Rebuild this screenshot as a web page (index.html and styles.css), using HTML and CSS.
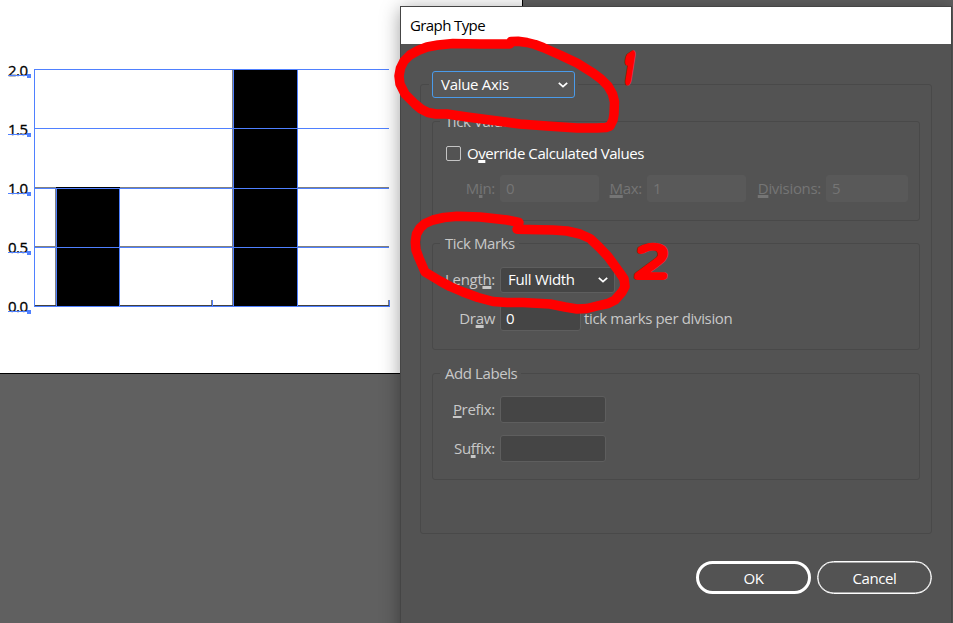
FILE: index.html
```html
<!DOCTYPE html>
<html lang="en">
<head>
    <meta charset="UTF-8">
    <meta name="viewport" content="width=device-width, initial-scale=1.0">
    <title>Graph Type</title>
    <link rel="stylesheet" href="styles.css">
</head>
<body>
    <div class="workspace">
        <div class="artboard">
            <svg class="graph" width="400" height="330" viewBox="0 0 400 330" shape-rendering="crispEdges">
                <g class="graph-labels">
                    <text x="8" y="75.5" textLength="20">2.0</text>
                    <text x="8" y="134.5" textLength="20">1.5</text>
                    <text x="8" y="193.5" textLength="20">1.0</text>
                    <text x="8" y="252.5" textLength="20">0.5</text>
                    <text x="8" y="311.5" textLength="20">0.0</text>
                </g>
                <g class="graph-ticks">
                    <path d="M34 187.5H389M34 246.5H389M232.5 70V306M55.5 187V306M388.5 300V306M211.5 300V306"/>
                    <path class="dark" d="M34 305.5H389"/>
                </g>
                <rect x="56" y="187" width="64" height="119"/>
                <rect x="233" y="70" width="64" height="236"/>
                <!-- selection outline -->
                <g class="graph-selection">
                    <path d="M34.5 69V307M34 69.5H389M34 128.5H389M34 188.5H389M34 247.5H389M34 306.5H389"/>
                    <path d="M56.5 188V306M119.5 188V306M233.5 70V306M297.5 70V306M212.5 300V306M389.5 300V307"/>
                    <path d="M8 75.5H28M8 134.5H28M8 193.5H28M8 252.5H28M8 311.5H28"/>
                </g>
                <g class="graph-anchors">
                    <rect x="27" y="74" width="4" height="4"/>
                    <rect x="27" y="133" width="4" height="4"/>
                    <rect x="27" y="192" width="4" height="4"/>
                    <rect x="27" y="251" width="4" height="4"/>
                    <rect x="27" y="310" width="4" height="4"/>
                </g>
            </svg>
        </div>

        <div class="dialog">
            <div class="dialog-title">Graph Type</div>
            <div class="dialog-body">
                <fieldset class="panel">
                    <legend>
                        <div class="select select-axis focused">
                            <span>Value Axis</span>
                            <svg width="10" height="6" viewBox="0 0 10 6"><path d="M.8.8L5 4.6 9.2.8"/></svg>
                        </div>
                    </legend>

                    <fieldset class="group group-values">
                        <legend>Tick Values</legend>
                        <div class="check-row">
                            <span class="checkbox"></span>
                            <span>O<u>v</u>erride Calculated Values</span>
                        </div>
                        <div class="row disabled">
                            <label>M<u>i</u>n:</label>
                            <div class="input w-99">0</div>
                            <label class="label-max"><u>M</u>ax:</label>
                            <div class="input w-99">1</div>
                            <label class="label-div"><u>D</u>ivisions:</label>
                            <div class="input w-82">5</div>
                        </div>
                    </fieldset>

                    <fieldset class="group group-marks">
                        <legend>Tick Marks</legend>
                        <div class="row">
                            <label>Lengt<u>h</u>:</label>
                            <div class="select select-length">
                                <span>Full Width</span>
                                <svg width="10" height="6" viewBox="0 0 10 6"><path d="M.8.8L5 4.6 9.2.8"/></svg>
                            </div>
                        </div>
                        <div class="row">
                            <label>Dr<u>a</u>w</label>
                            <div class="input w-81">0</div>
                            <span class="suffix">tick marks per division</span>
                        </div>
                    </fieldset>

                    <fieldset class="group group-labels">
                        <legend>Add Labels</legend>
                        <div class="row">
                            <label><u class="thin">P</u>refix:</label>
                            <div class="input w-106"></div>
                        </div>
                        <div class="row">
                            <label>Su<u>f</u>fix:</label>
                            <div class="input w-106"></div>
                        </div>
                    </fieldset>
                </fieldset>

                <div class="buttons">
                    <button class="button primary">OK</button>
                    <button class="button">Cancel</button>
                </div>
            </div>
        </div>

        <!-- red marker notes -->
        <svg class="notes" width="953" height="623" viewBox="0 0 953 623">
            <polyline points="510,44 480,44 453,43.5 438,45 427,47 418,50.5 410,55 404,61 400.5,68 399,76 400,84 405,94 415,104 421,109 428,112.5 436,114 447,114 467,117 490,120 520,124 547,126 577,128 597,128 606,127.5 610,126 613,120 614,114 614.5,102 612.5,94 608,86 601,79 593,73 577,63 560,55 543,47.5 535,44.5 527,42.5 518,41.3 511,41.5"/>
            <polyline points="519,222.5 507,220 480,217 457,216.3 444,217.5 433,220 425,223.5 420,228 416.5,234 415.3,242 416,250 419,258 425,272 440,281 450,286.5 463,292 478,297.5 493,301.5 507,302.5 523,302.5 550,304 565,307 577,309 587,308.5 597,306 608,303.5 615,300 622,292 625,286.5 624,279 620,273 608,256.5 599,247 590,238.5 580,234 567,231 553,230 540,229.7 517,229.3"/>
            <text class="note-one" transform="translate(623 80) skewX(-9) scale(.5 1)">1</text>
            <text class="note-two" transform="translate(634 276.5) skewX(-6) scale(1.3 1)">2</text>
        </svg>
    </div>
</body>
</html>
```
FILE: styles.css
```css
* {
    box-sizing: border-box;
}

body {
    margin: 0;
    font-family: "Open Sans", "Noto Sans", sans-serif;
    font-size: 15px;
    line-height: 21px;
    letter-spacing: -0.42px;
    color: #c8c8c8;
}

.workspace {
    position: relative;
    width: 953px;
    height: 623px;
    overflow: hidden;
    background: #606060;
}

.artboard {
    width: 523px;
    height: 374px;
    background: #fff;
    border-right: 1px solid #000;
    border-bottom: 1px solid #000;
}

/* graph */
.graph {
    display: block;
}

.graph-labels {
    font-size: 15px;
    fill: #000;
    stroke: #000;
    stroke-width: 0.3px;
    letter-spacing: 0;
}

.graph-ticks {
    stroke: #808080;
}

.graph-ticks .dark {
    stroke: #404040;
}

.graph-selection {
    fill: none;
    stroke: #4f80ff;
}

.graph-anchors {
    fill: #4f80ff;
}

/* dialog window */
.dialog {
    position: absolute;
    left: 400px;
    top: 6px;
    width: 552px;
    height: 640px;
    border: 1px solid #454545;
    background: #535353;
    box-shadow: 0 3px 18px rgba(0, 0, 0, 0.38);
}

.dialog-title {
    height: 37px;
    padding-left: 9px;
    line-height: 37px;
    letter-spacing: -0.6px;
    background: #fff;
    color: #000;
}

.dialog-body {
    padding: 27px 19px 0;
}

fieldset {
    min-width: 0;
    margin: 0;
    border: 1px solid #494949;
    border-radius: 3px;
}

.panel {
    height: 463px;
    padding: 0 11px;
}

.panel > legend {
    margin-left: -3px;
    padding: 0 3px;
}

.group {
    padding: 0 10px 0 13px;
}

.group > legend {
    height: 21px;
    margin-left: -6px;
    padding: 0 4px 0 5px;
}

.group-values {
    height: 110px;
    margin-top: 13px;
}

.group-marks {
    height: 117px;
    margin-top: 12px;
}

.group-labels {
    height: 117px;
    margin-top: 13px;
}

.check-row {
    display: flex;
    align-items: center;
    gap: 6px;
    height: 22px;
    margin: 10px 0 11px;
    color: #fff;
}

.checkbox {
    width: 15px;
    height: 15px;
    border: 1px solid #c4c4c4;
    border-radius: 2px;
}

.row {
    display: flex;
    align-items: center;
    height: 27px;
}

.group-marks .row,
.group-labels .row {
    margin-top: 12px;
}

.group-marks .row:last-child {
    height: 26px;
}

.row label {
    display: flex;
    justify-content: flex-end;
    width: 49px;
    margin-right: 5px;
    letter-spacing: -0.3px;
    white-space: nowrap;
}

.row .label-max {
    width: 43px;
}

.row .label-div {
    width: 75px;
}

u {
    text-decoration: underline 3px;
    text-underline-offset: 1px;
    text-decoration-skip-ink: none;
}

u.thin {
    text-decoration-thickness: 2px;
}

.input {
    height: 100%;
    padding-left: 5px;
    line-height: 25px;
    border: 1px solid #5e5e5e;
    border-radius: 3px;
    background: #454545;
    color: #fff;
}

.w-81 { width: 81px; }
.w-82 { width: 82px; }
.w-99 { width: 99px; }
.w-106 { width: 106px; }

.disabled {
    color: #757575;
}

.disabled .input {
    border-color: #595959;
    background: #595959;
    color: #757575;
}

.suffix {
    margin-left: 3px;
    letter-spacing: -0.35px;
}

.select {
    display: flex;
    align-items: center;
    justify-content: space-between;
    padding: 0 6px 0 8px;
    border: 1px solid #5e5e5e;
    border-radius: 3px;
    letter-spacing: -0.3px;
    background: #454545;
    color: #fff;
}

.select svg {
    fill: none;
    stroke: #fff;
    stroke-width: 1.7;
}

.select-axis {
    width: 143px;
    height: 27px;
    background: #585858;
}

.select-length {
    width: 115px;
    height: 26px;
    padding-left: 7px;
}

.focused {
    border-color: #4a9bea;
}

.buttons {
    display: flex;
    justify-content: flex-end;
    gap: 6px;
    margin-top: 27px;
}

.button {
    width: 115px;
    height: 33px;
    padding: 2px 0 0;
    font: inherit;
    letter-spacing: inherit;
    color: #fff;
    background: none;
    border: 1px solid #fff;
    border-radius: 17px;
    box-shadow: inset 0 0 0 0.5px #fff;
}

.button.primary {
    border-width: 3px;
    box-shadow: none;
}

/* marker */
.notes {
    position: absolute;
    left: 0;
    top: 0;
    fill: none;
    stroke: #f00;
    stroke-width: 9.5;
    stroke-linejoin: round;
    stroke-linecap: round;
}

.notes text {
    font-weight: 200;
    fill: #f00;
    letter-spacing: 0;
}

.notes .note-one {
    font-family: Roboto, sans-serif;
    font-size: 34px;
    stroke-width: 11px;
}

.notes .note-two {
    font-family: "DejaVu Sans Light", "DejaVu Sans", sans-serif;
    font-size: 42px;
    stroke-width: 6px;
}
```
